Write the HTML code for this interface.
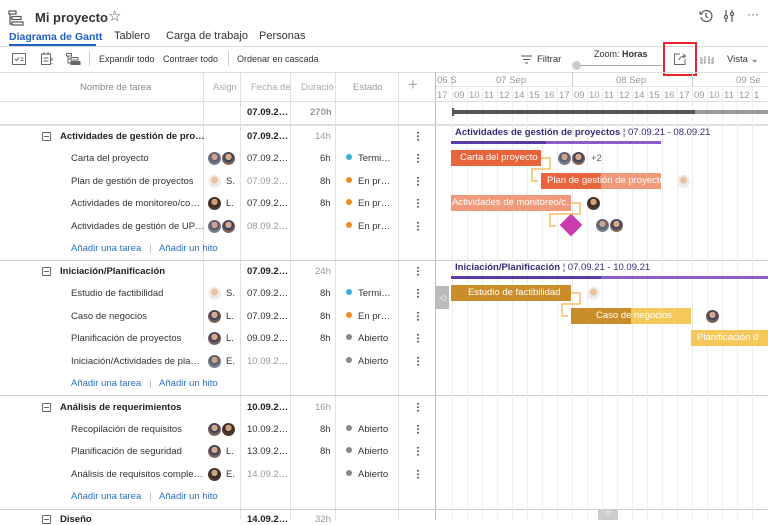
<!DOCTYPE html><html><head><meta charset="utf-8"><style>
*{box-sizing:border-box;margin:0;padding:0}
body{width:768px;height:520px;overflow:hidden;background:#fff;font-family:"Liberation Sans",sans-serif;font-size:10px;color:#333;position:relative}
.a{position:absolute;white-space:nowrap}
.vl{position:absolute;width:1px;background:#e2e2e2}
.hl{position:absolute;height:1px;background:#ccc;left:0;width:768px}
.t{position:absolute;font-size:9.5px;color:#333;white-space:nowrap}
.g{color:#999}
.b{font-weight:bold;color:#222}
.dot{display:inline-block;width:6px;height:6px;border-radius:50%;margin-right:6px;vertical-align:1px}
.av{position:absolute;width:13px;height:13px;border-radius:50%;background:radial-gradient(circle at 50% 38%,#c9a48a 30%,#556 32%,#7a8494 70%)}
.av2{background:radial-gradient(circle at 50% 38%,#d9a888 30%,#2c3a5a 32%,#8a6a5a 70%)}
.av3{background:radial-gradient(circle at 50% 38%,#c9a080 30%,#3a2a20 32%,#4a3a30 70%)}
.av4{background:radial-gradient(circle at 50% 40%,#e8c0a0 30%,#ece6e0 34%,#f2f0ee 70%)}
.bar{position:absolute;height:16px;color:#fff;font-size:9.5px;line-height:16px;padding-left:6px;overflow:hidden;white-space:nowrap}
.kb{position:absolute;left:417px;width:2px;height:10px;background:radial-gradient(circle,#666 0.9px,transparent 1.1px) 0 0/2px 3.5px repeat-y}
.mn{position:absolute;left:42px;width:9px;height:9px;border:1px solid #666;border-radius:1px}
.mn:after{content:"";position:absolute;left:1px;top:3px;width:5px;height:1px;background:#666}
.lk{position:absolute;color:#2a6fc9;font-size:9.5px}
</style></head><body>
<!-- top -->
<svg class="a" style="left:8px;top:10px" width="16" height="16" viewBox="0 0 16 16" fill="none" stroke="#555" stroke-width="1.2"><rect x="1" y="1" width="7" height="3"/><rect x="4" y="6.5" width="9" height="3"/><rect x="4" y="12" width="11" height="3"/><path d="M2 4v10h2M2 8h2"/></svg>
<div class="a" style="left:35px;top:10px;font-size:13px;font-weight:bold;color:#333">Mi proyecto</div>
<div class="a" style="left:108px;top:7px;font-size:15px;color:#555">☆</div>
<div class="a" style="left:9px;top:31px;font-size:10.5px;color:#1f5fbf;font-weight:bold">Diagrama de Gantt</div>
<div class="a" style="left:9px;top:44px;width:87px;height:2px;background:#1f5fbf"></div>
<div class="a" style="left:114px;top:30px;font-size:11px">Tablero</div>
<div class="a" style="left:166px;top:30px;font-size:11px">Carga de trabajo</div>
<div class="a" style="left:259px;top:30px;font-size:11px">Personas</div>
<svg class="a" style="left:699px;top:9px" width="14" height="14" viewBox="0 0 14 14" fill="none" stroke="#555" stroke-width="1.2"><path d="M2.5 4.5A5.5 5.5 0 1 1 2 8"/><path d="M1 2.5v2.5h2.5M7 4v3.5l2 1.5"/></svg>
<svg class="a" style="left:723px;top:9px" width="12" height="14" viewBox="0 0 12 14" fill="none" stroke="#555" stroke-width="1.2"><path d="M3 1v12M9 1v12"/><circle cx="3" cy="8" r="1.6" fill="#fff"/><circle cx="9" cy="5" r="1.6" fill="#fff"/></svg>
<div class="a" style="left:747px;top:7px;font-size:12px;color:#555">···</div>
<div class="hl" style="top:46px;background:#ddd"></div>
<!-- toolbar -->
<svg class="a" style="left:12px;top:53px" width="14" height="12" viewBox="0 0 14 12" fill="none" stroke="#666"><rect x="0.5" y="0.5" width="13" height="11"/><path d="M3 6l1.5 1.5L7 4.5M8.5 5h3M8.5 7.5h3"/></svg>
<svg class="a" style="left:41px;top:52px" width="12" height="13" viewBox="0 0 12 13" fill="none" stroke="#666"><rect x="0.5" y="2" width="9" height="10.5"/><path d="M3 0v3M7 0v3M2.5 6h5M2.5 9h5M11 6v3M11 11v1"/></svg>
<svg class="a" style="left:66px;top:53px" width="15" height="12" viewBox="0 0 15 12" fill="none" stroke="#666"><rect x="0.5" y="0.5" width="5" height="2.5"/><path d="M2 3v7h3M2 6h3"/><rect x="5" y="4.5" width="7" height="2.5"/><rect x="5" y="8.5" width="9" height="3" fill="#666"/></svg>
<div class="a" style="left:89px;top:51px;width:1px;height:15px;background:#ccc"></div>
<div class="a" style="left:99px;top:54px;font-size:9px">Expandir todo</div>
<div class="a" style="left:163px;top:54px;font-size:9px">Contraer todo</div>
<div class="a" style="left:228px;top:51px;width:1px;height:15px;background:#ccc"></div>
<div class="a" style="left:237px;top:54px;font-size:9px">Ordenar en cascada</div>
<svg class="a" style="left:521px;top:55px" width="11" height="9" viewBox="0 0 11 9" stroke="#555"><path d="M0 1h11M2 4.5h7M4 8h3"/></svg>
<div class="a" style="left:537px;top:54px;font-size:9.5px">Filtrar</div>
<div class="a" style="left:594px;top:49px;font-size:9px">Zoom: <b>Horas</b></div>
<div class="a" style="left:576px;top:65px;width:86px;height:1px;background:#aaa"></div>
<div class="a" style="left:572px;top:61px;width:9px;height:9px;border-radius:50%;background:#ccc"></div>
<div class="a" style="left:663px;top:42px;width:34px;height:34px;border:2px solid #e8232a"></div>
<svg class="a" style="left:674px;top:53px" width="13" height="12" viewBox="0 0 13 12" fill="none" stroke="#666"><path d="M6 1H0.5v10.5H11V6"/><path d="M5 7C6 4 8 3 11 3M9 1l2.5 2L9 5"/></svg>
<svg class="a" style="left:700px;top:55px" width="14" height="9" viewBox="0 0 14 9" fill="none" stroke="#777" stroke-width="0.9"><path d="M1 2v6h2M5 1v7h-1M9 1v7h1M13 2v6h-2M2 5h1M11 5h1"/></svg>
<div class="a" style="left:727px;top:54px;font-size:9.5px">Vista ⌄</div>
<div class="hl" style="top:72px;background:#ddd"></div>
<!-- grid header -->
<div class="a" style="left:80px;top:82px;font-size:9.5px;color:#888">Nombre de tarea</div>
<div class="a" style="left:213px;top:82px;font-size:9.5px;color:#aaa">Asign</div>
<div class="a" style="left:251px;top:82px;font-size:9.5px;color:#aaa">Fecha de</div>
<div class="a" style="left:301px;top:82px;font-size:9.5px;color:#aaa">Duració</div>
<div class="a" style="left:353px;top:82px;font-size:9.5px;color:#999">Estado</div>
<div class="a" style="left:408px;top:75px;font-size:17px;color:#aaa;font-weight:100">+</div>
<div class="vl" style="left:203px;top:72px;height:267px"></div>
<div class="vl" style="left:240px;top:72px;height:448px"></div>
<div class="vl" style="left:290px;top:72px;height:448px"></div>
<div class="vl" style="left:335px;top:72px;height:448px"></div>
<div class="vl" style="left:398px;top:72px;height:448px"></div>
<div class="vl" style="left:435px;top:72px;height:448px;background:#bbb"></div>
<div class="hl" style="top:101px;background:#ddd"></div>
<div class="hl" style="top:124px;height:2px;background:#ddd"></div>
<div class="hl" style="top:260px;background:#ccc"></div>
<div class="hl" style="top:395px;background:#ccc"></div>
<div class="hl" style="top:509px;background:#ccc"></div>
<!-- gantt header -->
<svg class="a" style="left:436px;top:72px" width="332" height="448">
<g stroke="#e4e4e4" stroke-width="1">
<line x1="16.5" y1="0" x2="16.5" y2="30"/>
<line x1="136.5" y1="0" x2="136.5" y2="30" stroke="#ccc"/>
<line x1="256.5" y1="0" x2="256.5" y2="30" stroke="#ccc"/>
<line x1="0" y1="14.5" x2="332" y2="14.5"/>
<line x1="0" y1="29.5" x2="332" y2="29.5" stroke="#ddd"/>
</g>
<g stroke="#eeeeee"><path d="M16.5 15V448M31.5 15V448M46.5 15V448M61.5 15V448M76.5 15V448M91.5 15V448M106.5 15V448M121.5 15V448M136.5 15V448M151.5 15V448M166.5 15V448M181.5 15V448M196.5 15V448M211.5 15V448M226.5 15V448M241.5 15V448M256.5 15V448M271.5 15V448M286.5 15V448M301.5 15V448M316.5 15V448"/></g>
<g font-family="Liberation Sans" font-size="9.5" fill="#999">
<text x="1" y="11">06 S</text><text x="60" y="11">07 Sep</text><text x="180" y="11">08 Sep</text><text x="300" y="11">09 Se</text>
<text x="1" y="26">17</text><text x="18" y="26">09</text><text x="33" y="26">10</text><text x="48" y="26">11</text><text x="63" y="26">12</text><text x="78" y="26">14</text><text x="93" y="26">15</text><text x="108" y="26">16</text><text x="123" y="26">17</text><text x="138" y="26">09</text><text x="153" y="26">10</text><text x="168" y="26">11</text><text x="183" y="26">12</text><text x="198" y="26">14</text><text x="213" y="26">15</text><text x="228" y="26">16</text><text x="243" y="26">17</text><text x="258" y="26">09</text><text x="273" y="26">10</text><text x="288" y="26">11</text><text x="303" y="26">12</text><text x="318" y="26">1</text>
</g>
<rect x="16" y="38" width="243" height="4" fill="#555"/><rect x="259" y="38" width="73" height="4" fill="#999"/><rect x="16" y="36" width="2" height="8" fill="#555"/>
</svg>
<!-- left rows -->
<div class="t b" style="left:247px;top:107px">07.09.2…</div><div class="t g" style="left:310px;top:107px;font-weight:bold">270h</div>

<div class="mn" style="top:132px"></div><div class="t b" style="left:60px;top:131px">Actividades de gestión de pro…</div><div class="t b" style="left:247px;top:131px">07.09.2…</div><div class="t g" style="left:315px;top:131px">14h</div><div class="kb" style="top:131px"></div>
<div class="t" style="left:71px;top:153px">Carta del proyecto</div><div class="av" style="left:208px;top:152px"></div><div class="av av2" style="left:222px;top:152px"></div><div class="t" style="left:247px;top:153px">07.09.2…</div><div class="t" style="left:320px;top:153px">6h</div><div class="t" style="left:346px;top:153px"><span class="dot" style="background:#3aaed8"></span>Termi…</div><div class="kb" style="top:153px"></div>
<div class="t" style="left:71px;top:176px">Plan de gestión de proyectos</div><div class="av av4" style="left:208px;top:175px"></div><div class="t" style="left:226px;top:176px">S.</div><div class="t g" style="left:247px;top:176px">07.09.2…</div><div class="t" style="left:320px;top:176px">8h</div><div class="t" style="left:346px;top:176px"><span class="dot" style="background:#f08a24"></span>En pr…</div><div class="kb" style="top:176px"></div>
<div class="t" style="left:71px;top:198px">Actividades de monitoreo/co…</div><div class="av av3" style="left:208px;top:197px"></div><div class="t" style="left:226px;top:198px">L.</div><div class="t" style="left:247px;top:198px">07.09.2…</div><div class="t" style="left:320px;top:198px">8h</div><div class="t" style="left:346px;top:198px"><span class="dot" style="background:#f08a24"></span>En pr…</div><div class="kb" style="top:198px"></div>
<div class="t" style="left:71px;top:221px">Actividades de gestión de UP…</div><div class="av" style="left:208px;top:220px"></div><div class="av av2" style="left:222px;top:220px"></div><div class="t g" style="left:247px;top:221px">08.09.2…</div><div class="t" style="left:346px;top:221px"><span class="dot" style="background:#f08a24"></span>En pr…</div><div class="kb" style="top:221px"></div>
<div class="lk" style="left:71px;top:243px">Añadir una tarea &nbsp;&nbsp;<span style="color:#9bb">|</span>&nbsp;&nbsp; Añadir un hito</div>

<div class="mn" style="top:267px"></div><div class="t b" style="left:60px;top:266px">Iniciación/Planificación</div><div class="t b" style="left:247px;top:266px">07.09.2…</div><div class="t g" style="left:315px;top:266px">24h</div><div class="kb" style="top:266px"></div>
<div class="t" style="left:71px;top:288px">Estudio de factibilidad</div><div class="av av4" style="left:208px;top:287px"></div><div class="t" style="left:226px;top:288px">S.</div><div class="t" style="left:247px;top:288px">07.09.2…</div><div class="t" style="left:320px;top:288px">8h</div><div class="t" style="left:346px;top:288px"><span class="dot" style="background:#3aaed8"></span>Termi…</div><div class="kb" style="top:288px"></div>
<div class="t" style="left:71px;top:311px">Caso de negocios</div><div class="av av2" style="left:208px;top:310px"></div><div class="t" style="left:226px;top:311px">L.</div><div class="t" style="left:247px;top:311px">07.09.2…</div><div class="t" style="left:320px;top:311px">8h</div><div class="t" style="left:346px;top:311px"><span class="dot" style="background:#f08a24"></span>En pr…</div><div class="kb" style="top:311px"></div>
<div class="t" style="left:71px;top:333px">Planificación de proyectos</div><div class="av av2" style="left:208px;top:332px"></div><div class="t" style="left:226px;top:333px">L.</div><div class="t" style="left:247px;top:333px">09.09.2…</div><div class="t" style="left:320px;top:333px">8h</div><div class="t" style="left:346px;top:333px"><span class="dot" style="background:#888"></span>Abierto</div><div class="kb" style="top:333px"></div>
<div class="t" style="left:71px;top:356px">Iniciación/Actividades de pla…</div><div class="av" style="left:208px;top:355px"></div><div class="t" style="left:226px;top:356px">E.</div><div class="t g" style="left:247px;top:356px">10.09.2…</div><div class="t" style="left:346px;top:356px"><span class="dot" style="background:#888"></span>Abierto</div><div class="kb" style="top:356px"></div>
<div class="lk" style="left:71px;top:378px">Añadir una tarea &nbsp;&nbsp;<span style="color:#9bb">|</span>&nbsp;&nbsp; Añadir un hito</div>

<div class="mn" style="top:403px"></div><div class="t b" style="left:60px;top:402px">Análisis de requerimientos</div><div class="t b" style="left:247px;top:402px">10.09.2…</div><div class="t g" style="left:315px;top:402px">16h</div><div class="kb" style="top:402px"></div>
<div class="t" style="left:71px;top:424px">Recopilación de requisitos</div><div class="av av2" style="left:208px;top:423px"></div><div class="av av3" style="left:222px;top:423px"></div><div class="t" style="left:247px;top:424px">10.09.2…</div><div class="t" style="left:320px;top:424px">8h</div><div class="t" style="left:346px;top:424px"><span class="dot" style="background:#888"></span>Abierto</div><div class="kb" style="top:424px"></div>
<div class="t" style="left:71px;top:446px">Planificación de seguridad</div><div class="av av2" style="left:208px;top:445px"></div><div class="t" style="left:226px;top:446px">L.</div><div class="t" style="left:247px;top:446px">13.09.2…</div><div class="t" style="left:320px;top:446px">8h</div><div class="t" style="left:346px;top:446px"><span class="dot" style="background:#888"></span>Abierto</div><div class="kb" style="top:446px"></div>
<div class="t" style="left:71px;top:469px">Análisis de requisitos comple…</div><div class="av av3" style="left:208px;top:468px"></div><div class="t" style="left:226px;top:469px">E.</div><div class="t g" style="left:247px;top:469px">14.09.2…</div><div class="t" style="left:346px;top:469px"><span class="dot" style="background:#888"></span>Abierto</div><div class="kb" style="top:469px"></div>
<div class="lk" style="left:71px;top:491px">Añadir una tarea &nbsp;&nbsp;<span style="color:#9bb">|</span>&nbsp;&nbsp; Añadir un hito</div>
<div class="mn" style="top:515px"></div><div class="t b" style="left:60px;top:514px">Diseño</div><div class="t b" style="left:247px;top:514px">14.09.2…</div><div class="t g" style="left:315px;top:514px">32h</div>

<!-- gantt bars -->
<div class="a" style="left:455px;top:127px;font-size:9.5px;color:#3a2a7a"><b>Actividades de gestión de proyectos</b> ¦ 07.09.21 - 08.09.21</div>
<div class="a" style="left:451px;top:141px;width:95px;height:3px;background:#5b3aa8"></div><div class="a" style="left:546px;top:141px;width:115px;height:3px;background:#8a5ccc"></div>
<div class="bar" style="left:451px;top:150px;width:90px;background:#e8643c;padding-left:9px">Carta del proyecto</div>
<div class="av" style="left:558px;top:152px"></div><div class="av av2" style="left:572px;top:152px"></div><div class="a" style="left:591px;top:153px;font-size:9.5px;color:#666">+2</div>
<div class="bar" style="left:541px;top:173px;width:120px;background:linear-gradient(90deg,#e8643c 50%,#f09a7c 50%)">Plan de gestión de proyectos</div>
<div class="av av4" style="left:677px;top:175px"></div>
<div class="bar" style="left:451px;top:195px;width:120px;background:#f09a7c;padding-left:1px">Actividades de monitoreo/c…</div>
<div class="av av3" style="left:587px;top:197px"></div>
<div class="a" style="left:563px;top:217px;width:16px;height:16px;background:#c83cb0;transform:rotate(45deg)"></div>
<div class="av" style="left:596px;top:219px"></div><div class="av av2" style="left:610px;top:219px"></div>
<svg class="a" style="left:430px;top:120px" width="338" height="240" fill="none" stroke="#f5b041" stroke-width="1.2">
<path d="M111 38H120V49H102V61H108"/><path d="M141 83H150V94H120V106H126"/>
<path d="M141 173H150V184H132V196H138"/>
</svg>
<div class="a" style="left:455px;top:262px;font-size:9.5px;color:#3a2a7a"><b>Iniciación/Planificación</b> ¦ 07.09.21 - 10.09.21</div>
<div class="a" style="left:451px;top:276px;width:150px;height:3px;background:#5b3aa8"></div><div class="a" style="left:601px;top:276px;width:167px;height:3px;background:#8a5ccc"></div>
<div class="a" style="left:436px;top:286px;width:13px;height:23px;background:#bbb;color:#fff;font-size:8px;line-height:23px;text-align:center">◁</div>
<div class="bar" style="left:451px;top:285px;width:120px;background:#c98e2a;padding-left:17px">Estudio de factibilidad</div>
<div class="av av4" style="left:587px;top:287px"></div>
<div class="bar" style="left:571px;top:308px;width:120px;background:linear-gradient(90deg,#c98e2a 50%,#f5c85a 50%);padding-left:25px">Caso de negocios</div>
<div class="av av2" style="left:706px;top:310px"></div>
<div class="bar" style="left:691px;top:330px;width:77px;background:#f5c85a">Planificación d</div>
<div class="a" style="left:598px;top:510px;width:20px;height:10px;background:#ccc;color:#fff;font-size:7px;text-align:center">▽</div>
</body></html>
